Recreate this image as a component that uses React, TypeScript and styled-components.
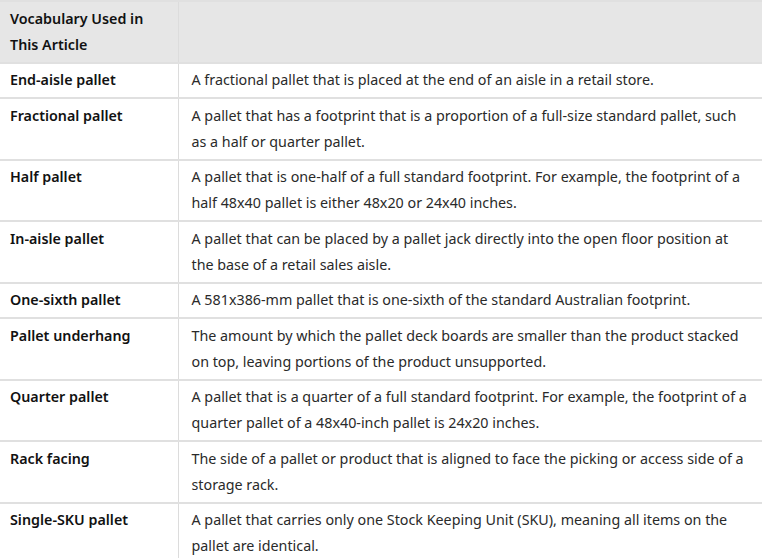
import React from 'react';
import styled, {createGlobalStyle} from 'styled-components';

const GlobalStyle = createGlobalStyle`
  html, body {
    margin: 0;
    padding: 0;
    background: #ffffff;
  }
  body {
    font-family: "Noto Sans", "Open Sans", sans-serif;
    color: #222222;
  }
`;

const Table = styled.table`
  width: 762px;
  border-collapse: collapse;
  font-size: 14.3px;
  line-height: 26px;
  table-layout: fixed;
`;

const HeadRow = styled.tr`
  background: #e6e6e6;
`;

const Cell = styled.td<{$term?: boolean; $head?: boolean}>`
  border-top: 2px solid #e0e0e0;
  border-left: ${p => (p.$term ? 'none' : '1px solid #dcdcdc')};
  padding: ${p => (p.$term ? '3.5px 10px 4px 10px' : '3.5px 12px 4px 13px')};
  vertical-align: top;
  font-weight: ${p => (p.$term || p.$head ? 600 : 400)};
  color: ${p => (p.$term || p.$head ? '#111111' : '#2a2a2a')};
`;

const rows: [string, string][] = [
  ['End-aisle pallet', 'A fractional pallet that is placed at the end of an aisle in a retail store.'],
  ['Fractional pallet', 'A pallet that has a footprint that is a proportion of a full-size standard pallet, such as a half or quarter pallet.'],
  ['Half pallet', 'A pallet that is one-half of a full standard footprint. For example, the footprint of a half 48x40 pallet is either 48x20 or 24x40 inches.'],
  ['In-aisle pallet', 'A pallet that can be placed by a pallet jack directly into the open floor position at the base of a retail sales aisle.'],
  ['One-sixth pallet', 'A 581x386-mm pallet that is one-sixth of the standard Australian footprint.'],
  ['Pallet underhang', 'The amount by which the pallet deck boards are smaller than the product stacked on top, leaving portions of the product unsupported.'],
  ['Quarter pallet', 'A pallet that is a quarter of a full standard footprint. For example, the footprint of a quarter pallet of a 48x40-inch pallet is 24x20 inches.'],
  ['Rack facing', 'The side of a pallet or product that is aligned to face the picking or access side of a storage rack.'],
  ['Single-SKU pallet', 'A pallet that carries only one Stock Keeping Unit (SKU), meaning all items on the pallet are identical.'],
];

const App: React.FC = () => {
    return (
        <>
            <GlobalStyle/>
            <Table>
                <colgroup>
                    <col style={{width: 178}}/>
                    <col/>
                </colgroup>
                <tbody>
                    <HeadRow>
                        <Cell $term $head>Vocabulary Used in This Article</Cell>
                        <Cell $head/>
                    </HeadRow>
                    {rows.map(([term, def]) => (
                        <tr key={term}>
                            <Cell $term>{term}</Cell>
                            <Cell>{def}</Cell>
                        </tr>
                    ))}
                </tbody>
            </Table>
        </>
    );
};

export default App;
